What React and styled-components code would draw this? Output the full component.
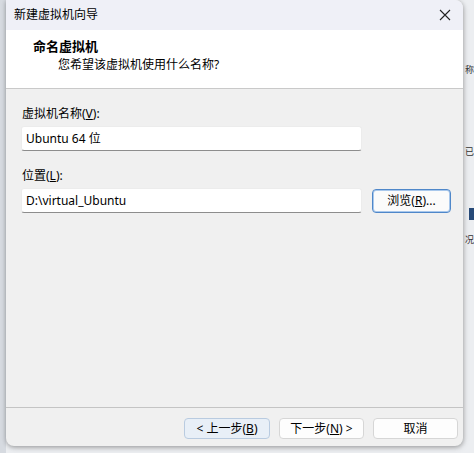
import React from "react";
import styled, { createGlobalStyle } from "styled-components";

const Global = createGlobalStyle`
  html, body { margin: 0; padding: 0; }
  body {
    width: 474px; height: 453px; overflow: hidden;
    background: #e9ebef;
    font-family: "Noto Sans", "Noto Sans CJK SC", sans-serif;
    font-size: 12px; color: #000;
  }
`;

const Desktop = styled.div`
  display: flex;
  width: 474px;
  height: 453px;
  background: linear-gradient(90deg, #d6dae0 0 6px, #eceef1 6px);
`;

const Dialog = styled.div`
  margin-left: 6px;
  width: 457px;
  height: 446px;
  display: flex;
  flex-direction: column;
  background: #f0f0f0;
  border-radius: 0 8px 8px 8px;
  box-shadow: 0 1px 4px rgba(0, 0, 0, 0.28), 1px 2px 6px rgba(0, 0, 0, 0.12);
  overflow: hidden;
  flex-shrink: 0;
`;

const TitleBar = styled.div`
  height: 30px;
  display: flex;
  align-items: center;
  justify-content: space-between;
  padding: 0 6px 0 8px;
  background: #eff0f7;
  font-size: 12px;
  line-height: 30px;
`;

const CloseIcon = styled.svg`
  width: 12px;
  height: 12px;
  margin-right: 6px;
`;

const Header = styled.div`
  height: 59px;
  background: #fff;
  border-bottom: 1px solid #c9c9c9;
  display: flex;
  flex-direction: column;
  padding-top: 8px;
  box-sizing: border-box;
`;

const HeaderTitle = styled.div`
  margin-left: 27px;
  font-weight: 700;
  font-size: 13px;
  line-height: 17px;
`;

const HeaderSub = styled.div`
  margin-left: 52px;
  font-size: 12px;
  line-height: 16px;
  margin-top: 2px;
`;

const Body = styled.div`
  flex: 1;
  padding: 17px 12px 0 15px;
  border-bottom: 1px solid #c4c4c4;
  display: flex;
  flex-direction: column;
`;

const Label = styled.div`
  margin-left: 1px;
  line-height: 16px;
  margin-top: ${(p) => p.$top || 0}px;
`;

const Row = styled.div`
  display: flex;
  align-items: center;
  margin-top: 4px;
`;

const TextBox = styled.div`
  width: 341px;
  height: 25px;
  box-sizing: border-box;
  background: #fff;
  border: 1px solid #ececec;
  border-bottom: 1px solid #8d8d8d;
  border-radius: 3px;
  padding-left: 4px;
  display: flex;
  align-items: center;
  line-height: 16px;
`;

const Button = styled.div`
  box-sizing: border-box;
  width: ${(p) => p.$w}px;
  height: ${(p) => p.$h}px;
  display: flex;
  align-items: center;
  justify-content: center;
  border-radius: 4px;
  background: ${(p) => (p.$tint ? "#e8eff7" : "#fdfdfd")};
  border: 1px solid ${(p) => (p.$tint ? "#b9cbe0" : "#d6d6d6")};
  font-size: 12px;
  line-height: 16px;
  flex-shrink: 0;
`;

const BrowseButton = styled(Button)`
  margin-left: 10px;
  border: 1px solid #4f87c9;
  box-shadow: inset 0 0 0 1px #a9c8ec;
  background: #fbfbfb;
`;

const Footer = styled.div`
  height: 38px;
  display: flex;
  justify-content: flex-end;
  align-items: flex-start;
  gap: 9px;
  padding: 10px 5px 0 0;
  box-sizing: border-box;
`;

const Behind = styled.div`
  flex: 1;
  overflow: hidden;
  display: flex;
  flex-direction: column;
  padding-left: 2px;
  color: #333;
  font-size: 9px;
  line-height: 12px;
`;

const BehindLine = styled.div`
  margin-top: ${(p) => p.$top}px;
  white-space: nowrap;
`;

const BehindBlock = styled.div`
  margin-top: ${(p) => p.$top}px;
  margin-left: 4px;
  width: 8px;
  height: 12px;
  background: #274a78;
`;

export default function App() {
  return (
    <>
      <Global />
      <Desktop>
        <Dialog>
          <TitleBar>
            <span>新建虚拟机向导</span>
            <CloseIcon viewBox="0 0 12 12">
              <path d="M1 1 L11 11 M11 1 L1 11" stroke="#222" strokeWidth="1.1" fill="none" />
            </CloseIcon>
          </TitleBar>
          <Header>
            <HeaderTitle>命名虚拟机</HeaderTitle>
            <HeaderSub>您希望该虚拟机使用什么名称?</HeaderSub>
          </Header>
          <Body>
            <Label>
              虚拟机名称(<u>V</u>):
            </Label>
            <Row>
              <TextBox>Ubuntu 64 位</TextBox>
            </Row>
            <Label $top={17}>
              位置(<u>L</u>):
            </Label>
            <Row>
              <TextBox>D:\virtual_Ubuntu</TextBox>
              <BrowseButton $w={79} $h={24}>
                浏览(<u>R</u>)...
              </BrowseButton>
            </Row>
          </Body>
          <Footer>
            <Button $w={86} $h={21} $tint>
              &lt; 上一步(<u>B</u>)
            </Button>
            <Button $w={85} $h={21}>
              下一步(<u>N</u>) &gt;
            </Button>
            <Button $w={85} $h={21}>
              取消
            </Button>
          </Footer>
        </Dialog>
        <Behind>
          <BehindLine $top={64}>称</BehindLine>
          <BehindLine $top={70}>已</BehindLine>
          <BehindBlock $top={50} />
          <BehindLine $top={14}>况</BehindLine>
        </Behind>
      </Desktop>
    </>
  );
}
